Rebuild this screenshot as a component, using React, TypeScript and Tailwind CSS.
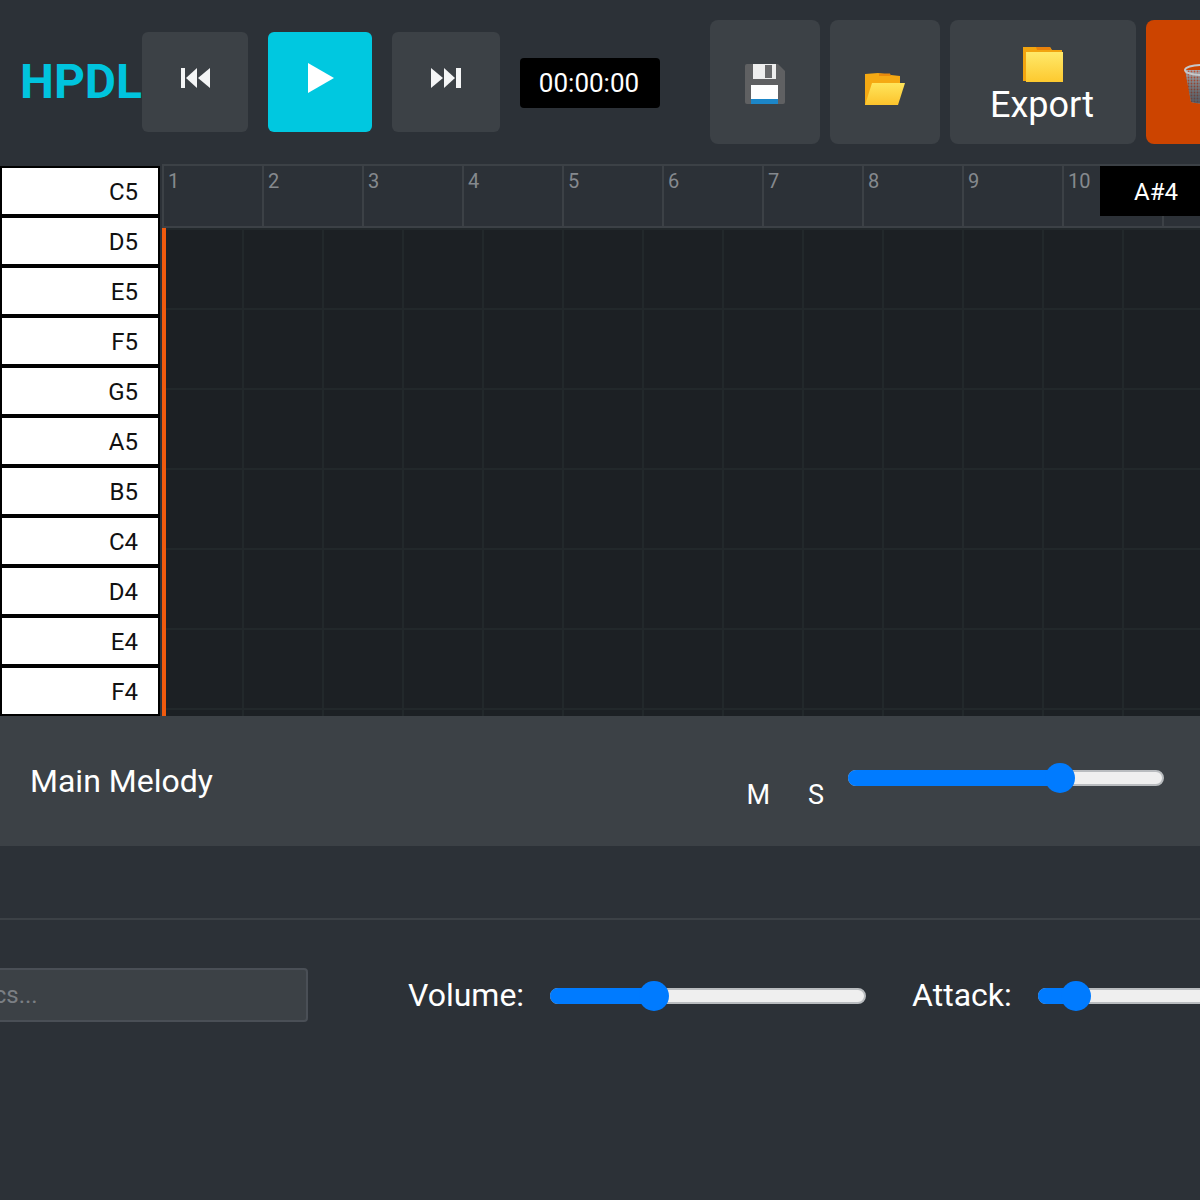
const notes = ['C5', 'D5', 'E5', 'F5', 'G5', 'A5', 'B5', 'C4', 'D4', 'E4', 'F4'];
const bars = [1, 2, 3, 4, 5, 6, 7, 8, 9, 10, null];

function PrevIcon() {
  return (
    <svg width="30" height="20" viewBox="0 0 30 20" fill="#f4f5f6">
      <rect x="1" y="0" width="4" height="20" />
      <path d="M6 10 17 0v20z" />
      <path d="M18 10 30 0v20z" />
    </svg>
  );
}

function NextIcon() {
  return (
    <svg width="30" height="20" viewBox="0 0 30 20" fill="#f4f5f6">
      <path d="M0 0 12 10 0 20z" />
      <path d="M13 0 24 10 13 20z" />
      <rect x="25" y="0" width="5" height="20" />
    </svg>
  );
}

function SaveIcon() {
  return (
    <svg width="40" height="40" viewBox="0 0 40 40">
      <path d="M2 0h31l7 7v31a2 2 0 0 1-2 2H2a2 2 0 0 1-2-2V2a2 2 0 0 1 2-2z" fill="#5f6062" />
      <rect x="8" y="0" width="23" height="15" fill="#eeeeee" />
      <rect x="20" y="1" width="7" height="13" fill="#68696b" />
      <rect x="6" y="21" width="27" height="19" fill="#ffffff" />
      <rect x="6" y="35" width="27" height="5" fill="#1c86c8" />
    </svg>
  );
}

function OpenFolderIcon() {
  return (
    <svg width="40" height="32" viewBox="0 0 40 32">
      <defs>
        <linearGradient id="openFront" x1="0" y1="0" x2="0" y2="1">
          <stop offset="0" stopColor="#ffe55c" />
          <stop offset="1" stopColor="#fcc32c" />
        </linearGradient>
      </defs>
      <path d="M0 1 L13 0 L26 2 L35 3 V11 L8 32 H0z" fill="#f5a913" />
      <path d="M14 0.5 H25 L26 3 H14z" fill="#e88a0c" />
      <path d="M7 10 H40 L33 32 H0z" fill="url(#openFront)" />
    </svg>
  );
}

function FolderIcon() {
  return (
    <svg width="40" height="35" viewBox="0 0 40 35">
      <defs>
        <linearGradient id="closedFront" x1="0" y1="0" x2="0" y2="1">
          <stop offset="0" stopColor="#ffe96a" />
          <stop offset="1" stopColor="#fdc92f" />
        </linearGradient>
      </defs>
      <path d="M0 0 H27 L29 3 H39 V34 H0z" fill="#f2a40f" />
      <path d="M13 0 H27 L28 3 H14z" fill="#e9820c" />
      <rect x="3" y="5" width="37" height="30" fill="url(#closedFront)" />
    </svg>
  );
}

function TrashIcon() {
  return (
    <svg width="34" height="40" viewBox="0 0 34 40">
      <defs>
        <pattern id="mesh" width="3" height="3" patternUnits="userSpaceOnUse">
          <rect width="3" height="3" fill="#a9adb2" />
          <circle cx="1.5" cy="1.5" r="0.9" fill="#c9573a" />
        </pattern>
        <linearGradient id="binShade" x1="0" y1="0" x2="0" y2="1">
          <stop offset="0" stopColor="#000" stopOpacity="0" />
          <stop offset="1" stopColor="#39424d" stopOpacity="0.75" />
        </linearGradient>
      </defs>
      <path d="M1 6 L7 38 Q17 41 27 38 L33 6z" fill="url(#mesh)" />
      <path d="M1 6 L7 38 Q17 41 27 38 L33 6z" fill="url(#binShade)" />
      <ellipse cx="17" cy="6" rx="16" ry="5" fill="none" stroke="#c6c8ca" strokeWidth="2" />
    </svg>
  );
}

function Slider({ percent, width = 316 }: { percent: number; width?: number }) {
  return (
    <div className="relative h-[16px] shrink-0 rounded-full border-2 border-[#b9bcbf] bg-[#efefef]" style={{ width }}>
      <div className="absolute -inset-y-[2px] -left-[2px] rounded-full bg-[#007bff]" style={{ width: `${percent}%` }} />
      <div
        className="absolute top-1/2 h-[30px] w-[30px] -translate-x-1/2 -translate-y-1/2 rounded-full bg-[#007bff]"
        style={{ left: `${percent}%` }}
      />
    </div>
  );
}

export default function App() {
  return (
    <div className="h-[1200px] w-[1200px] overflow-hidden bg-[#2c3137] font-['Roboto',sans-serif] text-white">
      <header className="flex h-[164px] items-center pl-[20px]">
        <h1 className="w-[122px] shrink-0 text-[48px] leading-none font-bold text-[#00c4de]">HPDL</h1>
        <button className="flex h-[100px] w-[106px] shrink-0 items-center justify-center rounded-[6px] bg-[#3c4146] pb-[8px]">
          <PrevIcon />
        </button>
        <button className="ml-[20px] flex h-[100px] w-[104px] shrink-0 items-center justify-center rounded-[6px] bg-[#00c8e0] pb-[8px] pl-[2px]">
          <svg width="26" height="30" viewBox="0 0 26 30" fill="#ffffff">
            <path d="M0 0 26 15 0 30z" />
          </svg>
        </button>
        <button className="ml-[20px] flex h-[100px] w-[108px] shrink-0 items-center justify-center rounded-[6px] bg-[#3c4146] pb-[8px]">
          <NextIcon />
        </button>
        <div className="ml-[20px] mt-[2px] flex h-[50px] w-[140px] shrink-0 items-center justify-center rounded-[4px] bg-black pr-[2px] text-[26px]">
          00:00:00
        </div>
        <button className="ml-[50px] flex h-[124px] w-[110px] shrink-0 items-center justify-center rounded-[8px] bg-[#3c4146] pt-[4px]">
          <SaveIcon />
        </button>
        <button className="ml-[10px] flex h-[124px] w-[110px] shrink-0 items-center justify-center rounded-[8px] bg-[#3c4146] pt-[14px]">
          <OpenFolderIcon />
        </button>
        <button className="ml-[10px] flex h-[124px] w-[186px] shrink-0 flex-col items-center justify-center rounded-[8px] bg-[#3c4146] pt-[10px] text-[36px] leading-[46px]">
          <FolderIcon />
          <span className="pr-[2px]">Export</span>
        </button>
        <button className="ml-[10px] flex h-[124px] w-[110px] shrink-0 items-center justify-center rounded-[8px] bg-[#cc4400] pt-[4px]">
          <TrashIcon />
        </button>
      </header>

      <section className="relative flex h-[552px]">
        <div className="w-[160px] shrink-0 pt-[2px]">
          {notes.map((note) => (
            <div
              key={note}
              className="flex h-[50px] items-center justify-end border-2 border-black bg-white pt-[2px] pr-[20px] text-[24px] text-[#111111]"
            >
              {note}
            </div>
          ))}
        </div>
        <div className="ml-[2px] min-w-0 flex-1">
          <div className="flex h-[64px] border-y-2 border-l-2 border-[#3c4146]">
            {bars.map((bar, i) => (
              <div key={i} className="h-full w-[100px] shrink-0 border-r-2 border-[#3c4146] pl-[4px] text-[20px] leading-[30px] text-[#85898e]">
                {bar}
              </div>
            ))}
          </div>
          <div className="relative h-[488px] bg-[#1c2024] bg-[linear-gradient(to_right,transparent_78px,#22282b_78px),linear-gradient(to_bottom,transparent_78px,#22282b_78px)] bg-[length:80px_80px] bg-[position:2px_2px]">
            <div className="absolute inset-y-0 left-0 w-[4px] bg-[#f05a0e]" />
          </div>
        </div>
        <div className="absolute top-[2px] right-0 flex h-[50px] w-[100px] items-center justify-end bg-black pt-[2px] pr-[22px] text-[24px]">
          A#4
        </div>
      </section>

      <section className="flex h-[130px] items-center bg-[#3c4146] pr-[36px] pl-[30px]">
        <span className="text-[32px]">Main Melody</span>
        <div className="ml-auto flex items-center">
          <span className="mt-[28px] text-[27px] leading-none">M</span>
          <span className="mt-[28px] ml-[38px] text-[27px] leading-none">S</span>
          <div className="mb-[6px] ml-[24px]">
            <Slider percent={67.3} />
          </div>
        </div>
      </section>

      <section className="mt-[72px] flex items-center border-t-2 border-[#3c4146] pt-[48px]">
        <input
          className="-ml-[57px] h-[54px] w-[365px] shrink-0 rounded-[4px] border-2 border-[#4a4f56] bg-[#3c4146] px-[12px] text-[24px] placeholder:text-[#7b7f84]"
          placeholder="Lyrics..."
        />
        <span className="ml-[100px] shrink-0 text-[32px]">Volume:</span>
        <div className="ml-[26px] mt-[2px]">
          <Slider percent={32.8} />
        </div>
        <span className="ml-[46px] shrink-0 text-[32px]">Attack:</span>
        <div className="ml-[26px] mt-[2px]">
          <Slider percent={11.5} />
        </div>
      </section>
    </div>
  );
}
